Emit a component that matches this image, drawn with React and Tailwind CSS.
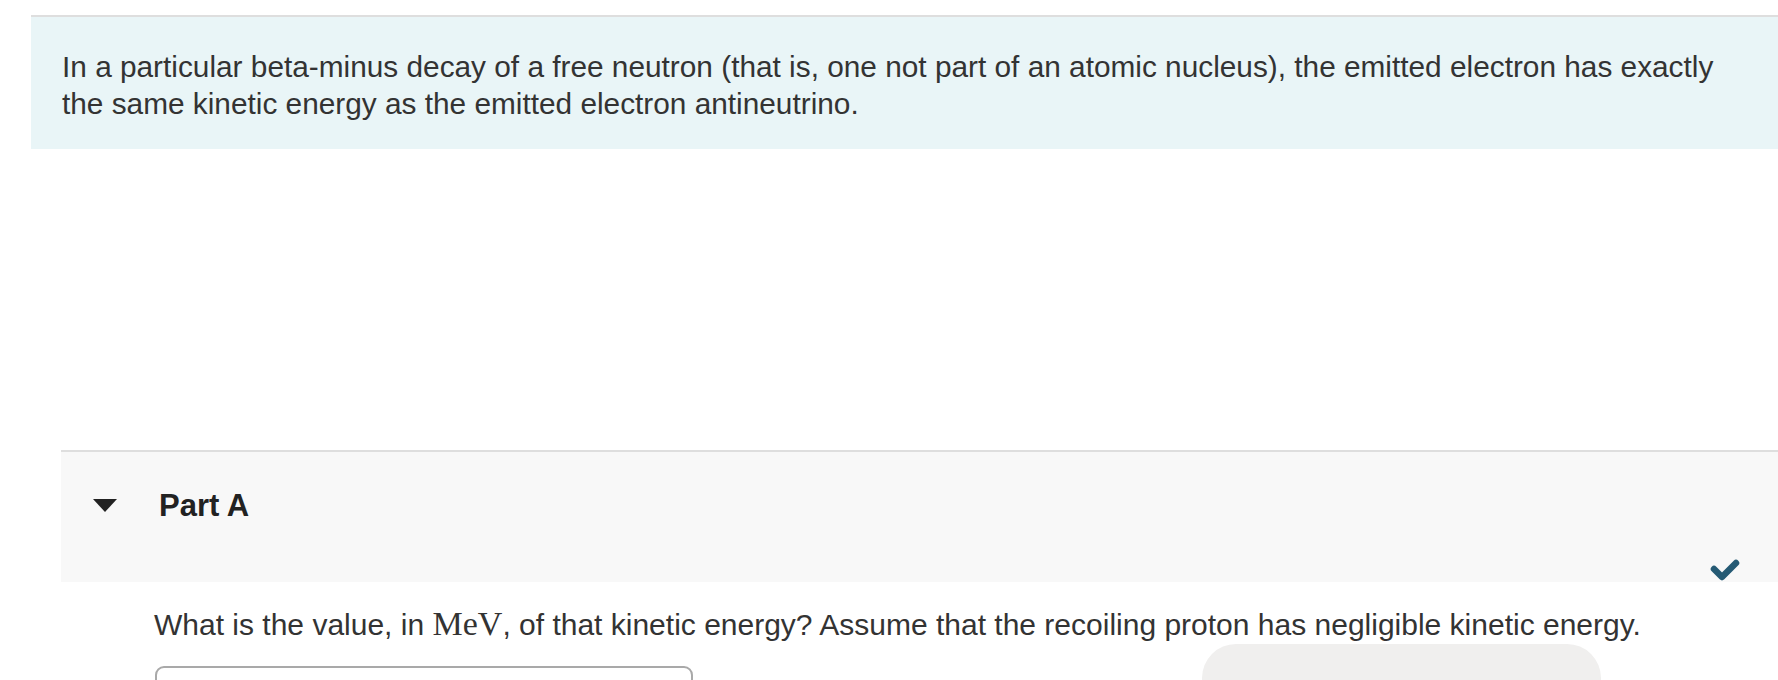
export default function App() {
  return (
    <div className="h-[680px] w-full overflow-hidden bg-white text-[#333] font-['Liberation_Sans',Arial,sans-serif]">
      <div className="pt-[15px] pl-[31px]">
        <div className="border-t-2 border-[#dedede] bg-[#e9f5f7] pl-[31px] pr-[30px] pt-[31px] pb-[27px] text-[29.8px] leading-[37px]">
          <p>
            In a particular beta-minus decay of a free neutron (that is, one not part of an atomic nucleus), the emitted electron has exactly
            <br />
            the same kinetic energy as the emitted electron antineutrino.
          </p>
        </div>
      </div>

      <div className="mt-[301px] ml-[61px] flex h-[132px] border-t-2 border-[#dedede] bg-[#f8f8f8]">
        <div className="flex flex-1 items-start pt-[36px] pl-[32px]">
          <div className="flex h-[36px] items-center">
            <svg width="24" height="13" viewBox="0 0 24 13" className="mt-[-1px]">
              <polygon points="0,0 24,0 12,13" fill="#222" />
            </svg>
          </div>
          <h2 className="ml-[42px] text-[31px] font-bold leading-[36px] text-[#222]">Part A</h2>
        </div>
        <div className="mr-[37px] flex items-end">
          <svg width="32" height="26" viewBox="0 0 32 26" className="mb-[-1px]">
            <polyline points="5,12 13,20 27,6" fill="none" stroke="#255a74" strokeWidth="6.5" strokeLinecap="round" strokeLinejoin="round" />
          </svg>
        </div>
      </div>

      <div className="pl-[154px] pt-[24px]">
        <p className="text-[30px] leading-[36px]">
          What is the value, in{" "}
          <span className="font-['Liberation_Serif',serif] text-[34px]">MeV</span>, of that kinetic energy? Assume that the recoiling proton has negligible kinetic energy.
        </p>
        <div className="mt-px flex items-start">
          <div className="ml-px mt-[22px] h-[60px] w-[538px] rounded-[9px] border-2 border-[#a9a9a9] bg-white" />
          <div className="ml-[509px] h-[80px] w-[399px] rounded-t-[34px] bg-[#f0efee]" />
        </div>
      </div>
    </div>
  );
}
